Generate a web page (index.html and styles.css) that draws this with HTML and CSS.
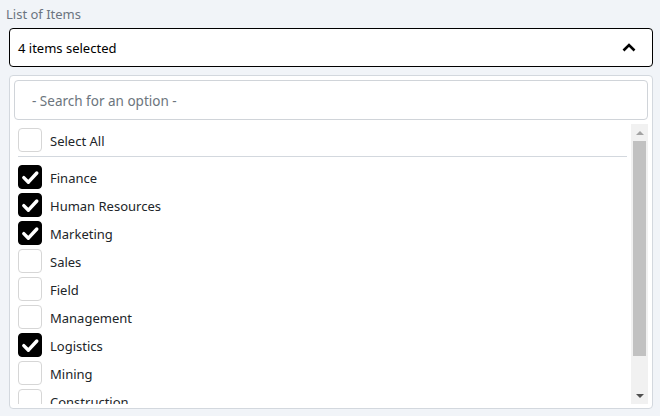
FILE: index.html
```html
<!DOCTYPE html>
<html>
<head>
<meta charset="utf-8">
<link rel="stylesheet" href="styles.css">
</head>
<body>
<div class="field">
  <div class="label">List of Items</div>
  <div class="select">
    <span class="select-text">4 items selected</span>
    <svg class="chevron" width="14" height="9" viewBox="0 0 14 9"><path d="M1.5 7.5 L7 2 L12.5 7.5" fill="none" stroke="#000" stroke-width="2.6" stroke-linejoin="miter"/></svg>
  </div>
  <div class="panel">
    <div class="search">- Search for an option -</div>
    <div class="list-wrap">
      <div class="list">
        <div class="row"><span class="box"></span><span class="text">Select All</span></div>
        <div class="sep"></div>
        <div class="items">
          <div class="row"><span class="box on"><svg width="24" height="24" viewBox="0 0 24 24"><path d="M5.8 12.6 L10.4 17.2 L18.8 8" fill="none" stroke="#fff" stroke-width="3.4" stroke-linecap="round" stroke-linejoin="round"/></svg></span><span class="text">Finance</span></div>
          <div class="row"><span class="box on"><svg width="24" height="24" viewBox="0 0 24 24"><path d="M5.8 12.6 L10.4 17.2 L18.8 8" fill="none" stroke="#fff" stroke-width="3.4" stroke-linecap="round" stroke-linejoin="round"/></svg></span><span class="text">Human Resources</span></div>
          <div class="row"><span class="box on"><svg width="24" height="24" viewBox="0 0 24 24"><path d="M5.8 12.6 L10.4 17.2 L18.8 8" fill="none" stroke="#fff" stroke-width="3.4" stroke-linecap="round" stroke-linejoin="round"/></svg></span><span class="text">Marketing</span></div>
          <div class="row"><span class="box"></span><span class="text">Sales</span></div>
          <div class="row"><span class="box"></span><span class="text">Field</span></div>
          <div class="row"><span class="box"></span><span class="text">Management</span></div>
          <div class="row"><span class="box on"><svg width="24" height="24" viewBox="0 0 24 24"><path d="M5.8 12.6 L10.4 17.2 L18.8 8" fill="none" stroke="#fff" stroke-width="3.4" stroke-linecap="round" stroke-linejoin="round"/></svg></span><span class="text">Logistics</span></div>
          <div class="row"><span class="box"></span><span class="text">Mining</span></div>
          <div class="row"><span class="box"></span><span class="text">Construction</span></div>
        </div>
      </div>
      <div class="scrollbar">
        <div class="sb-btn"><span class="arrow-up"></span></div>
        <div class="sb-track"><div class="sb-thumb"></div></div>
        <div class="sb-btn"><span class="arrow-down"></span></div>
      </div>
    </div>
  </div>
</div>
</body>
</html>
```
FILE: styles.css
```css
html, body {
  margin: 0;
  padding: 0;
  background: #f1f4f8;
  font-family: "Noto Sans", "Open Sans", sans-serif;
}
.field {
  padding: 4px 7px 0 9px;
  width: 644px;
}
.label {
  font-size: 13px;
  line-height: 20px;
  color: #6b7480;
  margin-left: -3px;
  margin-bottom: 4px;
}
.select {
  box-sizing: border-box;
  height: 39px;
  background: #fff;
  border: 1px solid #000;
  border-radius: 4px;
  display: flex;
  align-items: center;
  justify-content: space-between;
  padding: 0 16px 0 8px;
}
.select-text {
  font-size: 13px;
  color: #000;
}
.chevron {
  display: block;
}
.panel {
  margin-top: 8px;
  box-sizing: border-box;
  height: 334px;
  background: #fff;
  border: 1px solid #d3d8de;
  border-radius: 4px;
  padding: 4px;
  display: flex;
  flex-direction: column;
  gap: 4px;
}
.search {
  box-sizing: border-box;
  height: 40px;
  border: 1px solid #d0d4d9;
  border-radius: 4px;
  display: flex;
  align-items: center;
  padding: 1px 0 0 17px;
  font-size: 13.5px;
  color: #6c757d;
}
.list-wrap {
  height: 280px;
  display: flex;
  overflow: hidden;
}
.list {
  flex: 1;
  padding: 4px;
  overflow: hidden;
}
.row {
  display: flex;
  align-items: center;
  gap: 8px;
  height: 24px;
}
.box {
  box-sizing: border-box;
  width: 24px;
  height: 24px;
  border: 1px solid #d6d6d6;
  border-radius: 4px;
  background: #fff;
  flex: none;
  position: relative;
}
.box.on {
  background: #000;
  border-color: #000;
}
.box.on svg {
  position: absolute;
  left: -1px;
  top: -1px;
}
.text {
  font-size: 13px;
  color: #212529;
  padding-top: 2px;
}
.sep {
  height: 1px;
  background: #d3d8de;
  margin: 4px 0 8px;
}
.items {
  display: flex;
  flex-direction: column;
  gap: 4px;
}
.scrollbar {
  width: 17px;
  flex: none;
  background: #f1f1f1;
  display: flex;
  flex-direction: column;
}
.sb-btn {
  height: 17px;
  display: flex;
  align-items: center;
  justify-content: center;
}
.sb-track {
  flex: 1;
  padding: 0 2px;
}
.sb-thumb {
  height: 215px;
  background: #c1c1c1;
}
.arrow-up {
  width: 0;
  height: 0;
  border-left: 4px solid transparent;
  border-right: 4px solid transparent;
  border-bottom: 4px solid #a3a3a3;
}
.arrow-down {
  width: 0;
  height: 0;
  border-left: 4px solid transparent;
  border-right: 4px solid transparent;
  border-top: 4px solid #505050;
}
```
